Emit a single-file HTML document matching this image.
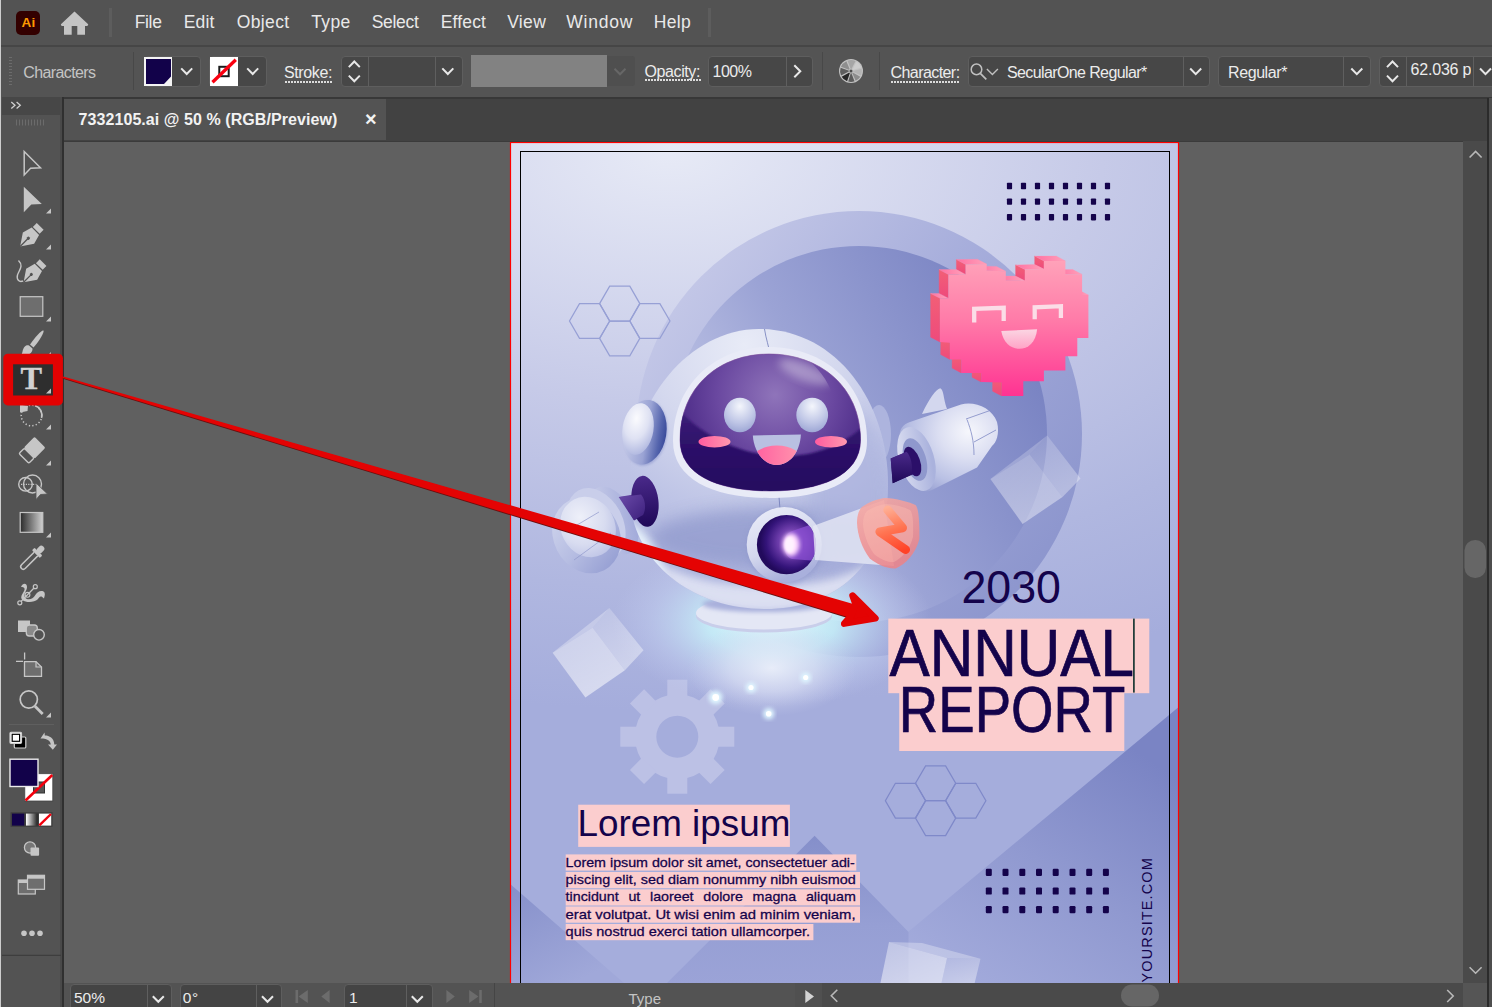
<!DOCTYPE html>
<html>
<head>
<meta charset="utf-8">
<title>7332105.ai @ 50 % (RGB/Preview)</title>
<style>
*{box-sizing:border-box;margin:0;padding:0}
html,body{width:1492px;height:1007px;overflow:hidden;background:#535353;font-family:"Liberation Sans",sans-serif;color:#e4e4e4}
#app{position:absolute;left:0;top:0;width:1492px;height:1007px;overflow:hidden;background:#535353}
.abs{position:absolute}
svg{position:absolute;overflow:visible}
.t{position:absolute;white-space:nowrap;line-height:1}
#menubar{left:0;top:0;width:1492px;height:45px;background:#535353}
#mline{left:0;top:45px;width:1492px;height:2px;background:#464646}
#ctrlbar{left:0;top:47px;width:1492px;height:50.5px;background:#545454}
#cline{left:0;top:97.4px;width:1492px;height:1.7px;background:#383838}
.fld{position:absolute;top:56px;height:31px;background:#474747;border:1px solid #5e5e5e;border-radius:4px}
.fld i{position:absolute;top:0;width:1px;height:29px;background:#5f5f5f}
#tabbar{left:63.9px;top:99px;width:1424px;height:42.7px;background:#424242;border-bottom:1.7px solid #3b3b3b}
#tab{left:63.9px;top:99px;width:322.1px;height:41px;background:#535353}
#canvas{left:63.9px;top:141.7px;width:1399.1px;height:841.3px;background:#606060;overflow:hidden}
#tools{left:1.3px;top:97.4px;width:59.2px;height:910px;background:#535353}
</style>
</head>
<body>
<div id="app">
<div id="menubar" class="abs"></div>
<div id="mline" class="abs"></div>
<div id="ctrlbar" class="abs"></div>
<div id="cline" class="abs"></div>
<div id="tabbar" class="abs"></div>
<div id="tab" class="abs"></div>
<div id="canvas" class="abs">
<svg style="left:-63.9px;top:-141.7px" width="1492" height="1007" viewBox="0 0 1492 1007">
<defs>
<clipPath id="ab"><rect x="511" y="143" width="667.5" height="845"/></clipPath>
<radialGradient id="bg" gradientUnits="userSpaceOnUse" cx="670" cy="150" r="560" gradientTransform="translate(670 150) scale(1.72 1) translate(-670 -150)"><stop offset="0" stop-color="#e7eaf6"/><stop offset="0.45" stop-color="#c6cae8"/><stop offset="0.78" stop-color="#b0b7e0"/><stop offset="1" stop-color="#a5addc"/></radialGradient>
<linearGradient id="ring" gradientUnits="userSpaceOnUse" x1="690" y1="280" x2="1060" y2="560"><stop offset="0" stop-color="#c3c7e7"/><stop offset="0.45" stop-color="#a6addb"/><stop offset="1" stop-color="#8c95cd"/></linearGradient>
<linearGradient id="disc" gradientUnits="userSpaceOnUse" x1="1010" y1="330" x2="660" y2="520"><stop offset="0" stop-color="#7a84c3"/><stop offset="0.5" stop-color="#9ba3d5"/><stop offset="1" stop-color="#cdd1ec"/></linearGradient>
<linearGradient id="dark" gradientUnits="userSpaceOnUse" x1="1120" y1="740" x2="960" y2="980"><stop offset="0" stop-color="#7a84c4"/><stop offset="0.5" stop-color="#9099d0"/><stop offset="1" stop-color="#a2aadb"/></linearGradient>
<linearGradient id="dark3" gradientUnits="userSpaceOnUse" x1="0" y1="836" x2="0" y2="985"><stop offset="0" stop-color="#858fca"/><stop offset="0.6" stop-color="#969fd4"/><stop offset="1" stop-color="#9ba3d7"/></linearGradient>
<linearGradient id="dark2" gradientUnits="userSpaceOnUse" x1="510" y1="890" x2="560" y2="990"><stop offset="0" stop-color="#8791cb"/><stop offset="1" stop-color="#a0a8d9"/></linearGradient>
<radialGradient id="glow" cx="0.5" cy="0.5" r="0.5"><stop offset="0" stop-color="#e2feff" stop-opacity="1"/><stop offset="0.4" stop-color="#c8f2fa" stop-opacity="0.85"/><stop offset="0.75" stop-color="#c4d2f2" stop-opacity="0.4"/><stop offset="1" stop-color="#c0c8ee" stop-opacity="0"/></radialGradient>
<radialGradient id="glow2" cx="0.5" cy="0.5" r="0.5"><stop offset="0" stop-color="#eceffa" stop-opacity="0.9"/><stop offset="0.5" stop-color="#dde1f4" stop-opacity="0.6"/><stop offset="1" stop-color="#c8cdec" stop-opacity="0"/></radialGradient>
<radialGradient id="body" gradientUnits="userSpaceOnUse" cx="745" cy="345" r="275"><stop offset="0" stop-color="#e8ebf7"/><stop offset="0.35" stop-color="#d4d8ee"/><stop offset="0.62" stop-color="#bec4e6"/><stop offset="1" stop-color="#a3abd9"/></radialGradient>
<radialGradient id="face" gradientUnits="userSpaceOnUse" cx="775" cy="395" r="105"><stop offset="0" stop-color="#8f74ba"/><stop offset="0.55" stop-color="#6a48a0"/><stop offset="1" stop-color="#472683"/></radialGradient>
<linearGradient id="faceLow" x1="0" y1="0" x2="0" y2="1"><stop offset="0" stop-color="#43237f"/><stop offset="0.5" stop-color="#2c1068"/><stop offset="1" stop-color="#230a5e"/></linearGradient>
<radialGradient id="eye" cx="0.5" cy="0.25" r="0.8"><stop offset="0" stop-color="#f4f6fc"/><stop offset="0.6" stop-color="#bfc6e6"/><stop offset="1" stop-color="#98a2d2"/></radialGradient>
<linearGradient id="cheek" x1="0" x2="1"><stop offset="0" stop-color="#ff5c9f"/><stop offset="1" stop-color="#ff98ae"/></linearGradient>
<linearGradient id="heart" x1="0" y1="0" x2="0" y2="1"><stop offset="0" stop-color="#ffa2b9"/><stop offset="0.45" stop-color="#ff7aa8"/><stop offset="1" stop-color="#ff3392"/></linearGradient>
<linearGradient id="heartT" x1="0" y1="0" x2="1" y2="0"><stop offset="0" stop-color="#ff70a2"/><stop offset="1" stop-color="#ffa2ba"/></linearGradient>
<linearGradient id="hmouth" x1="0" y1="0" x2="0" y2="1"><stop offset="0" stop-color="#fbd6e3"/><stop offset="1" stop-color="#ffa3c6"/></linearGradient>
<linearGradient id="heartS" x1="0" y1="0" x2="0" y2="1"><stop offset="0" stop-color="#f26076"/><stop offset="1" stop-color="#ee4a7c"/></linearGradient>
<radialGradient id="glove" cx="0.7" cy="0.32" r="0.85"><stop offset="0" stop-color="#f6f7fc"/><stop offset="0.35" stop-color="#dcdff2"/><stop offset="0.7" stop-color="#b9c0e4"/><stop offset="1" stop-color="#8f98cd"/></radialGradient>
<linearGradient id="handB" x1="0" y1="0" x2="1" y2="0.6"><stop offset="0" stop-color="#d2d6ed"/><stop offset="1" stop-color="#a3abda"/></linearGradient>
<linearGradient id="handF" x1="0.2" y1="0" x2="0.6" y2="1"><stop offset="0" stop-color="#d0d5ed"/><stop offset="0.55" stop-color="#b6bde2"/><stop offset="1" stop-color="#98a1d4"/></linearGradient>
<radialGradient id="handI" cx="0.45" cy="0.3" r="0.75"><stop offset="0" stop-color="#eef0f9"/><stop offset="0.6" stop-color="#d8dcf0"/><stop offset="1" stop-color="#bcc2e5"/></radialGradient>
<linearGradient id="earO" x1="0" y1="0" x2="1" y2="0"><stop offset="0" stop-color="#c9ceea"/><stop offset="0.55" stop-color="#9aa3d4"/><stop offset="0.85" stop-color="#5464ad"/><stop offset="1" stop-color="#3a4b9b"/></linearGradient>
<radialGradient id="earI" cx="0.4" cy="0.3" r="0.8"><stop offset="0" stop-color="#fbfbfe"/><stop offset="0.5" stop-color="#dfe2f3"/><stop offset="1" stop-color="#a7afdc"/></radialGradient>
<linearGradient id="armL" x1="0" y1="0" x2="1" y2="1"><stop offset="0" stop-color="#6a4aa8"/><stop offset="1" stop-color="#3c1f7c"/></linearGradient>
<linearGradient id="cuff" x1="0" y1="0" x2="1" y2="0.3"><stop offset="0" stop-color="#dfe2f3"/><stop offset="1" stop-color="#aab2dd"/></linearGradient>
<linearGradient id="shield" x1="0" y1="0" x2="0.3" y2="1"><stop offset="0" stop-color="#f7a9a2"/><stop offset="1" stop-color="#ec8388"/></linearGradient>
<linearGradient id="bolt" gradientUnits="userSpaceOnUse" x1="885" y1="508" x2="900" y2="552"><stop offset="0" stop-color="#ffb096"/><stop offset="0.5" stop-color="#ff7452"/><stop offset="1" stop-color="#ff4228"/></linearGradient>
<linearGradient id="arm" x1="0" y1="0" x2="0" y2="1"><stop offset="0" stop-color="#4a2a8a"/><stop offset="1" stop-color="#1f0858"/></linearGradient>
<radialGradient id="chest" gradientUnits="userSpaceOnUse" cx="792" cy="542" r="32"><stop offset="0" stop-color="#9a62d0"/><stop offset="0.45" stop-color="#6a3aa8"/><stop offset="0.8" stop-color="#34147a"/><stop offset="1" stop-color="#220a5c"/></radialGradient>
<linearGradient id="rim" x1="0" y1="0" x2="0.4" y2="1"><stop offset="0" stop-color="#eceef9"/><stop offset="0.6" stop-color="#d4d8ee"/><stop offset="1" stop-color="#a9b0dc"/></linearGradient>
<linearGradient id="beam" gradientUnits="userSpaceOnUse" x1="800" y1="545" x2="890" y2="535"><stop offset="0" stop-color="#fff" stop-opacity="0.95"/><stop offset="1" stop-color="#eef0fa" stop-opacity="0.55"/></linearGradient>
<linearGradient id="cubeA" x1="0" y1="0" x2="0.6" y2="1"><stop offset="0" stop-color="#fff" stop-opacity="0.38"/><stop offset="1" stop-color="#fff" stop-opacity="0.55"/></linearGradient>
<linearGradient id="cubeB" x1="0" y1="0" x2="0.4" y2="1"><stop offset="0" stop-color="#fff" stop-opacity="0.18"/><stop offset="1" stop-color="#fff" stop-opacity="0.42"/></linearGradient>
<filter id="b2" x="-20%" y="-20%" width="140%" height="140%"><feGaussianBlur stdDeviation="2"/></filter>
<filter id="b4" x="-30%" y="-30%" width="160%" height="160%"><feGaussianBlur stdDeviation="4"/></filter>
<filter id="b8" x="-30%" y="-30%" width="160%" height="160%"><feGaussianBlur stdDeviation="8"/></filter>
<filter id="b1" x="-20%" y="-20%" width="140%" height="140%"><feGaussianBlur stdDeviation="1"/></filter>
</defs>
<g clip-path="url(#ab)">
<rect x="510" y="142" width="670" height="850" fill="url(#bg)"/>
<circle cx="859" cy="434" r="223" fill="url(#ring)"/>
<circle cx="859" cy="434" r="188" fill="url(#disc)"/>
<polygon points="1180,706 908,932 908,990 1180,990" fill="url(#dark)"/>
<polygon points="814.6,835.7 908.5,932 908.5,990 660,990" fill="url(#dark3)"/>
<polygon points="510,884 632,990 510,990" fill="url(#dark2)"/>
<polygon points="639.8,303.6 629.8,321.0 609.7,321.0 599.6,303.6 609.7,286.2 629.8,286.2" fill="none" stroke="#97a0d5" stroke-width="1.25"/><polygon points="609.7,321.0 599.6,338.4 579.5,338.4 569.5,321.0 579.5,303.6 599.6,303.6" fill="none" stroke="#97a0d5" stroke-width="1.25"/><polygon points="670.0,321.0 659.9,338.4 639.8,338.4 629.8,321.0 639.8,303.6 659.9,303.6" fill="none" stroke="#97a0d5" stroke-width="1.25"/><polygon points="639.8,338.4 629.8,355.8 609.7,355.8 599.6,338.4 609.7,321.0 629.8,321.0" fill="none" stroke="#97a0d5" stroke-width="1.25"/>
<polygon points="955.7,783.3 945.6,800.7 925.6,800.7 915.5,783.3 925.6,765.9 945.6,765.9" fill="none" stroke="#7f89c9" stroke-width="1.25"/><polygon points="925.6,800.7 915.5,818.1 895.4,818.1 885.4,800.7 895.4,783.3 915.5,783.3" fill="none" stroke="#7f89c9" stroke-width="1.25"/><polygon points="985.9,800.7 975.8,818.1 955.7,818.1 945.6,800.7 955.7,783.3 975.8,783.3" fill="none" stroke="#7f89c9" stroke-width="1.25"/><polygon points="955.7,818.1 945.6,835.5 925.6,835.5 915.5,818.1 925.6,800.7 945.6,800.7" fill="none" stroke="#7f89c9" stroke-width="1.25"/>
<g fill="#bcc1e5"><path fill-rule="evenodd" d="M677.3 736.7 m-42.5 0 a42.5 42.5 0 1 0 85 0 a42.5 42.5 0 1 0 -85 0 Z M677.3 736.7 m-21 0 a21 21 0 1 1 42 0 a21 21 0 1 1 -42 0 Z"/><rect x="667.3" y="679.7" width="20" height="17.5" transform="rotate(0 677.3 736.7)"/><rect x="667.3" y="679.7" width="20" height="17.5" transform="rotate(45 677.3 736.7)"/><rect x="667.3" y="679.7" width="20" height="17.5" transform="rotate(90 677.3 736.7)"/><rect x="667.3" y="679.7" width="20" height="17.5" transform="rotate(135 677.3 736.7)"/><rect x="667.3" y="679.7" width="20" height="17.5" transform="rotate(180 677.3 736.7)"/><rect x="667.3" y="679.7" width="20" height="17.5" transform="rotate(225 677.3 736.7)"/><rect x="667.3" y="679.7" width="20" height="17.5" transform="rotate(270 677.3 736.7)"/><rect x="667.3" y="679.7" width="20" height="17.5" transform="rotate(315 677.3 736.7)"/></g>
<g fill="#14034b"><rect x="1006.9" y="182.8" width="5.2" height="6.4" rx="0.8"/><rect x="1020.9" y="182.8" width="5.2" height="6.4" rx="0.8"/><rect x="1034.9" y="182.8" width="5.2" height="6.4" rx="0.8"/><rect x="1048.9" y="182.8" width="5.2" height="6.4" rx="0.8"/><rect x="1062.9" y="182.8" width="5.2" height="6.4" rx="0.8"/><rect x="1076.9" y="182.8" width="5.2" height="6.4" rx="0.8"/><rect x="1090.9" y="182.8" width="5.2" height="6.4" rx="0.8"/><rect x="1104.9" y="182.8" width="5.2" height="6.4" rx="0.8"/><rect x="1006.9" y="198.4" width="5.2" height="6.4" rx="0.8"/><rect x="1020.9" y="198.4" width="5.2" height="6.4" rx="0.8"/><rect x="1034.9" y="198.4" width="5.2" height="6.4" rx="0.8"/><rect x="1048.9" y="198.4" width="5.2" height="6.4" rx="0.8"/><rect x="1062.9" y="198.4" width="5.2" height="6.4" rx="0.8"/><rect x="1076.9" y="198.4" width="5.2" height="6.4" rx="0.8"/><rect x="1090.9" y="198.4" width="5.2" height="6.4" rx="0.8"/><rect x="1104.9" y="198.4" width="5.2" height="6.4" rx="0.8"/><rect x="1006.9" y="214.0" width="5.2" height="6.4" rx="0.8"/><rect x="1020.9" y="214.0" width="5.2" height="6.4" rx="0.8"/><rect x="1034.9" y="214.0" width="5.2" height="6.4" rx="0.8"/><rect x="1048.9" y="214.0" width="5.2" height="6.4" rx="0.8"/><rect x="1062.9" y="214.0" width="5.2" height="6.4" rx="0.8"/><rect x="1076.9" y="214.0" width="5.2" height="6.4" rx="0.8"/><rect x="1090.9" y="214.0" width="5.2" height="6.4" rx="0.8"/><rect x="1104.9" y="214.0" width="5.2" height="6.4" rx="0.8"/></g>
<g fill="#14034b"><rect x="985.8" y="868.8" width="6" height="7.2" rx="1.2"/><rect x="1002.5" y="868.8" width="6" height="7.2" rx="1.2"/><rect x="1019.3" y="868.8" width="6" height="7.2" rx="1.2"/><rect x="1036.0" y="868.8" width="6" height="7.2" rx="1.2"/><rect x="1052.7" y="868.8" width="6" height="7.2" rx="1.2"/><rect x="1069.5" y="868.8" width="6" height="7.2" rx="1.2"/><rect x="1086.2" y="868.8" width="6" height="7.2" rx="1.2"/><rect x="1102.9" y="868.8" width="6" height="7.2" rx="1.2"/><rect x="985.8" y="887.4" width="6" height="7.2" rx="1.2"/><rect x="1002.5" y="887.4" width="6" height="7.2" rx="1.2"/><rect x="1019.3" y="887.4" width="6" height="7.2" rx="1.2"/><rect x="1036.0" y="887.4" width="6" height="7.2" rx="1.2"/><rect x="1052.7" y="887.4" width="6" height="7.2" rx="1.2"/><rect x="1069.5" y="887.4" width="6" height="7.2" rx="1.2"/><rect x="1086.2" y="887.4" width="6" height="7.2" rx="1.2"/><rect x="1102.9" y="887.4" width="6" height="7.2" rx="1.2"/><rect x="985.8" y="906.0" width="6" height="7.2" rx="1.2"/><rect x="1002.5" y="906.0" width="6" height="7.2" rx="1.2"/><rect x="1019.3" y="906.0" width="6" height="7.2" rx="1.2"/><rect x="1036.0" y="906.0" width="6" height="7.2" rx="1.2"/><rect x="1052.7" y="906.0" width="6" height="7.2" rx="1.2"/><rect x="1069.5" y="906.0" width="6" height="7.2" rx="1.2"/><rect x="1086.2" y="906.0" width="6" height="7.2" rx="1.2"/><rect x="1102.9" y="906.0" width="6" height="7.2" rx="1.2"/></g>
<ellipse cx="772" cy="622" rx="160" ry="85" fill="url(#glow)"/><ellipse cx="772" cy="668" rx="85" ry="48" fill="url(#glow2)"/>
<polygon points="552.6,652.8 592.6,627.8 624.9,670.3 585.4,697.5" fill="url(#cubeA)"/><polygon points="552.6,652.8 609.4,607.9 592.6,627.8" fill="#fff" fill-opacity="0.3"/><polygon points="592.6,627.8 609.4,607.9 643.5,650.2 624.9,670.3" fill="url(#cubeB)"/>
<polygon points="990.4,479.1 1029.7,454.5 1062.5,497.1 1022.6,523.9" fill="url(#cubeA)" opacity="0.75"/><polygon points="990.4,479.1 1047.2,435.4 1029.7,454.5" fill="#fff" fill-opacity="0.22"/><polygon points="1029.7,454.5 1047.2,435.4 1080.5,478.5 1062.5,497.1" fill="url(#cubeB)" opacity="0.8"/>
<polygon points="889,942 947,958 940,990 879,990" fill="url(#cubeA)"/><polygon points="947,958 980.5,958.7 973,990 940,990" fill="url(#cubeB)"/><polygon points="889,942 922,943 980.5,958.7 947,958" fill="#fff" fill-opacity="0.3"/>
<circle cx="715.7" cy="697.5" r="6.8" fill="#dff6ff" filter="url(#b2)"/><circle cx="715.7" cy="697.5" r="3.4" fill="#fff"/><circle cx="751" cy="687.5" r="5.2" fill="#dff6ff" filter="url(#b2)"/><circle cx="751" cy="687.5" r="2.6" fill="#fff"/><circle cx="805.7" cy="677.5" r="5.2" fill="#dff6ff" filter="url(#b2)"/><circle cx="805.7" cy="677.5" r="2.6" fill="#fff"/><circle cx="768.7" cy="713.7" r="5.6" fill="#dff6ff" filter="url(#b2)"/><circle cx="768.7" cy="713.7" r="2.8" fill="#fff"/>
<ellipse cx="879" cy="434" rx="12" ry="29" fill="#b1b8e0" opacity="0.85"/>
<path d="M922 414 C929 399 936 389 940.3 388.3 C944 390 943 398 947 409 Z" fill="#d3d7ee"/>
<path d="M900 440 C898 430 903 424 910 422 L961 404.5 C975 401 992 408 997 422 C1000 434 996 443 992 446 L977 467.5 L932 490 C925 493 917 491 916 489 Z" fill="url(#glove)"/>
<ellipse cx="916.5" cy="459" rx="17.5" ry="33" transform="rotate(-17 916.5 459)" fill="url(#cuff)"/>
<ellipse cx="915" cy="459.5" rx="11" ry="22" transform="rotate(-17 915 459.5)" fill="#8f98cd"/>
<path d="M890.7 458.4 L907.5 451.4 L915.5 473.3 L892.7 483.2 Z" fill="url(#arm)"/>
<ellipse cx="912.5" cy="461.5" rx="7.5" ry="15.5" transform="rotate(-20 912.5 461.5)" fill="#2b0f69"/>
<path d="M890.7 458.4 L906.5 451.8 C911 456 913 466 911.5 474.5 L892.7 483.2 Z" fill="url(#arm)"/>
<path d="M966 419 L990 410.5 M974 442 L996 430 M967 419.5 C971 430 974 441 974 455" fill="none" stroke="#7f89c4" stroke-width="0.8"/>
<ellipse cx="613.5" cy="520.5" rx="21" ry="36.5" transform="rotate(-27 613.5 520.5)" fill="url(#handB)"/>
<ellipse cx="596" cy="524" rx="27" ry="38" transform="rotate(-27 596 524)" fill="#c9ceea"/>
<ellipse cx="586.5" cy="535.5" rx="33" ry="39" transform="rotate(-27 586.5 535.5)" fill="url(#handF)"/>
<ellipse cx="588" cy="527" rx="27" ry="31" transform="rotate(-27 588 527)" fill="url(#handI)"/>
<path d="M572 528 L599 512 M574 560 L611 533" fill="none" stroke="#8f98cc" stroke-width="0.7"/>
<ellipse cx="764" cy="616" rx="68" ry="16.5" fill="#c9ceea"/>
<ellipse cx="764" cy="613" rx="68" ry="16.5" fill="#e4e7f5"/>
<ellipse cx="764" cy="604" rx="62" ry="8" fill="#a9b0dc" filter="url(#b2)"/>
<clipPath id="bc"><path d="M759 329 C690 329 629 400 629 489 C629 560 690 609 765 609 C840 609 888 560 888 485 C888 400 835 329 759 329 Z"/></clipPath>
<path d="M759 329 C690 329 629 400 629 489 C629 560 690 609 765 609 C840 609 888 560 888 485 C888 400 835 329 759 329 Z" fill="url(#body)"/>
<g clip-path="url(#bc)"><ellipse cx="775" cy="538" rx="125" ry="30" fill="#8d96cb" opacity="0.7" filter="url(#b8)"/><ellipse cx="850" cy="500" rx="40" ry="90" fill="#a9b0dc" opacity="0.6" filter="url(#b8)"/><path d="M640 550 C670 600 720 612 765 612 C810 612 850 598 876 560 C850 578 810 586 765 586 C720 586 675 578 640 550 Z" fill="#dfe2f3" opacity="0.95" filter="url(#b4)"/><ellipse cx="642" cy="560" rx="16" ry="40" transform="rotate(-25 642 560)" fill="#eefaff" opacity="0.9" filter="url(#b4)"/></g>
<path d="M764.5 329 C766 339 769 347 770 354 M779 497 L780 509" stroke="#6f7ab8" stroke-width="0.8" fill="none"/>
<ellipse cx="646" cy="433.5" rx="21" ry="32.5" transform="rotate(9 646 433.5)" fill="#7d88c6" opacity="0.5" filter="url(#b1)"/>
<ellipse cx="644.6" cy="432.2" rx="21.8" ry="32.5" transform="rotate(9 644.6 432.2)" fill="url(#earO)"/>
<ellipse cx="638" cy="429" rx="15.5" ry="26" transform="rotate(9 638 429)" fill="url(#earI)"/>
<path d="M618.7 497 L642.7 493 L646 514 L634 520.5 Z" fill="url(#armL)"/>
<ellipse cx="645" cy="501.3" rx="13.4" ry="25.6" transform="rotate(-7 645 501.3)" fill="url(#arm)"/>
<path d="M620 497 L641 494.5 C646 500 646 510 643 515 L634 520 Z" fill="url(#armL)"/>
<path d="M673 441 C673 384 716 347 769 347 C824 347 867 384 867 441 C867 481 824 498 770 498 C716 498 673 481 673 441 Z" fill="#e9ebf7"/>
<path d="M680 440 C680 386 720 354 769 354 C819 354 860.5 386 860.5 440 C860.5 476 820 491 770 491 C720 491 680 476 680 440 Z" fill="url(#face)" stroke="#7b4b9a" stroke-width="1" stroke-opacity="0.6"/>
<clipPath id="fc"><path d="M680 440 C680 386 720 354 769 354 C819 354 860.5 386 860.5 440 C860.5 476 820 491 770 491 C720 491 680 476 680 440 Z"/></clipPath>
<path clip-path="url(#fc)" d="M670 398 C690 428 735 458 790 456 C828 454 852 438 870 420 L870 500 L670 500 Z" fill="url(#faceLow)" filter="url(#b1)"/>
<ellipse cx="805" cy="372" rx="28" ry="9" transform="rotate(22 805 372)" fill="#fff" opacity="0.35" filter="url(#b4)" clip-path="url(#fc)"/>
<ellipse cx="739.9" cy="415" rx="15.9" ry="17.3" fill="url(#eye)"/><ellipse cx="812.2" cy="415" rx="15.9" ry="17.3" fill="url(#eye)"/>
<ellipse cx="714.5" cy="441.7" rx="16" ry="5.8" fill="url(#cheek)"/><ellipse cx="831" cy="441.7" rx="16" ry="5.8" fill="url(#cheek)"/>
<clipPath id="mc"><path d="M752.8 435.4 L800.9 434.6 C800 452 790 465 777 465 C764 465 754 452 752.8 435.4 Z"/></clipPath>
<g clip-path="url(#mc)"><rect x="750" y="432" width="54" height="36" fill="#b9c0e2"/><ellipse cx="777" cy="462" rx="26" ry="16.5" fill="url(#cheek)"/></g>
<circle cx="784.6" cy="546" r="39" fill="#8f98cc" opacity="0.5" filter="url(#b2)"/>
<circle cx="784.3" cy="544.7" r="37.6" fill="url(#rim)"/>
<circle cx="786.5" cy="544.7" r="29.6" fill="url(#chest)"/>
<clipPath id="cc"><circle cx="786.5" cy="544.7" r="29.6"/></clipPath>
<path clip-path="url(#cc)" d="M792 531 L830 518 L830 562 L792 559 C782 556 780 535 792 531 Z" fill="#8d52d6" opacity="0.75"/>
<path d="M813 526 L884 500 L894 566 L815 560 Z" fill="#e6e8f5" opacity="0.8"/>
<ellipse cx="791" cy="544.7" rx="8.5" ry="11.5" fill="#ffdcff" filter="url(#b2)"/>
<ellipse cx="789.5" cy="544.7" rx="5" ry="8" fill="#fff2ff" filter="url(#b1)"/>
<path d="M861.9 507 C869 502 878 498.5 885.7 498 C896 498.5 908 501.5 915.5 505 C918.5 508 919.5 520 919.4 538.7 C916 553 906 564 895.6 568.5 C886 569 877 564 869.8 558.6 C862 548 857.5 535 857 522.9 C857 515 859 510 861.9 507 Z" fill="url(#shield)" fill-opacity="0.86"/>
<path d="M867 511 C873 507 880 504.5 886 504 C895 504.5 904 507 910 510 C913 513 913.5 523 913 537 C910 549 902 558 894 562 C887 562.5 880 559 874 554 C868 546 863.5 534 863 524 C863 518 864.5 513.5 867 511 Z" fill="#ffc2b4" fill-opacity="0.35"/>
<path d="M887.7 510 L902.6 527.8 L879.8 531.8 L905.6 549.6" fill="none" stroke="url(#bolt)" stroke-width="8.8" stroke-linecap="round" stroke-linejoin="round"/>
<g fill="url(#heartS)" stroke="url(#heartS)" stroke-width="0.4"><polygon points="1024.9,280.7 1024.9,269.6 1015.6,264.9 1015.6,276.0"/><polygon points="1043.9,269.1 1043.9,260.9 1034.7,256.1 1034.7,264.4"/><polygon points="1001.8,395.9 1001.8,382.4 992.6,377.7 992.6,391.2"/><polygon points="981.2,382.0 981.2,372.9 972.0,368.1 972.0,377.2"/><polygon points="961.3,372.9 961.3,359.4 952.1,354.6 952.1,368.1"/><polygon points="949.9,359.4 949.9,342.7 940.7,337.9 940.7,354.6"/><polygon points="939.9,341.9 939.9,298.2 930.6,293.5 930.6,337.2"/><polygon points="948.3,298.2 948.3,274.4 939.1,269.6 939.1,293.5"/><polygon points="965.6,274.4 965.6,264.4 956.4,259.6 956.4,269.6"/></g>
<g fill="url(#heartT)" stroke="#ff8fb0" stroke-width="0.3"><polygon points="965.6,264.4 986.7,264.1 977.5,259.3 956.4,259.6"/><polygon points="986.7,270.7 1005.8,271.2 996.6,266.4 977.5,266.0"/><polygon points="1005.8,280.7 1024.9,280.7 1015.6,276.0 996.6,276.0"/><polygon points="1024.9,269.6 1043.9,269.1 1034.7,264.4 1015.6,264.9"/><polygon points="1043.9,260.9 1065.4,260.9 1056.2,256.1 1034.7,256.1"/><polygon points="1065.4,274.4 1082.1,274.4 1072.8,269.6 1056.2,269.6"/><polygon points="1082.1,295.0 1088.4,295.0 1079.2,290.3 1072.8,290.3"/><polygon points="939.9,298.2 948.3,298.2 939.1,293.5 930.6,293.5"/><polygon points="948.3,274.4 965.6,274.4 956.4,269.6 939.1,269.6"/></g>
<polygon points="965.6,264.4 986.7,264.1 986.7,270.7 1005.8,271.2 1005.8,280.7 1024.9,280.7 1024.9,269.6 1043.9,269.1 1043.9,260.9 1065.4,260.9 1065.4,274.4 1082.1,274.4 1082.1,295.0 1088.4,295.0 1088.4,337.9 1077.3,337.9 1077.3,356.2 1065.4,356.2 1065.4,370.5 1043.9,370.5 1043.9,381.3 1023.3,381.3 1023.3,395.9 1001.8,395.9 1001.8,382.4 981.2,382.0 981.2,372.9 961.3,372.9 961.3,359.4 949.9,359.4 949.9,342.7 939.9,341.9 939.9,298.2 948.3,298.2 948.3,274.4 965.6,274.4" fill="url(#heart)"/>
<polyline points="974.2,322.4 974.2,308.9 1003.7,307.8 1003.7,320.9" fill="none" stroke="#fbdde7" stroke-width="4.3"/><polyline points="1034.7,319.2 1034.7,307.3 1060.9,306.2 1060.9,318.1" fill="none" stroke="#fbdde7" stroke-width="4.3"/>
<path d="M1001.3 331.0 L1037.1 329.2 C1035.1 354.7 1005.3 355.5 1001.3 331.0 Z" fill="url(#hmouth)"/>
<g fill="#fbcdce"><rect x="888.3" y="618.6" width="261" height="74.6"/><rect x="899.2" y="692.6" width="225.1" height="58.4"/><rect x="578.2" y="804.7" width="211.7" height="42.2"/><rect x="565.7" y="854.4" width="290.6" height="16.2"/><rect x="565.7" y="872" width="294.3" height="16.2"/><rect x="565.7" y="889.3" width="294.3" height="16.2"/><rect x="565.7" y="906.5" width="294.3" height="16.2"/><rect x="565.7" y="924" width="247.7" height="16.2"/></g>
<g fill="#14034b" font-family="Liberation Sans, sans-serif">
<text x="961.5" y="602.5" font-size="46" textLength="99.5" lengthAdjust="spacingAndGlyphs" >2030</text>
<text x="889.6" y="675.9" font-size="66.5" textLength="244.5" lengthAdjust="spacingAndGlyphs" stroke="#14034b" stroke-width="0.7">ANNUAL</text>
<text x="898.8" y="732.4" font-size="65.5" textLength="226.5" lengthAdjust="spacingAndGlyphs" stroke="#14034b" stroke-width="0.7">REPORT</text>
<text x="577.4" y="836.2" font-size="37.5" textLength="213" lengthAdjust="spacingAndGlyphs" >Lorem ipsum</text>
<text x="565.6" y="866.9" font-size="13.6" textLength="289.2" lengthAdjust="spacingAndGlyphs" stroke="#14034b" stroke-width="0.28">Lorem ipsum dolor sit amet, consectetuer adi-</text>
<text x="565.6" y="884.1" font-size="13.6" textLength="290.2" lengthAdjust="spacingAndGlyphs" stroke="#14034b" stroke-width="0.28">piscing elit, sed diam nonummy nibh euismod</text>
<text x="565.6" y="901.4" font-size="13.6" textLength="290.2" lengthAdjust="spacingAndGlyphs" stroke="#14034b" stroke-width="0.28" word-spacing="5.5">tincidunt ut laoreet dolore magna aliquam</text>
<text x="565.6" y="918.6" font-size="13.6" textLength="290" lengthAdjust="spacingAndGlyphs" stroke="#14034b" stroke-width="0.28">erat volutpat. Ut wisi enim ad minim veniam,</text>
<text x="565.6" y="935.7" font-size="13.6" textLength="244.5" lengthAdjust="spacingAndGlyphs" stroke="#14034b" stroke-width="0.28">quis nostrud exerci tation ullamcorper.</text>
<text transform="translate(1152.3,1031.2) rotate(-90)" x="0" y="0" font-size="14.5" textLength="173" lengthAdjust="spacing">WWW.YOURSITE.COM</text>
</g>
<rect x="1133.1" y="618.6" width="1.6" height="74" fill="#0c2f2c"/>
</g>
<rect x="520.5" y="151.5" width="649" height="860" fill="none" stroke="#000" stroke-width="1"/>
<rect x="510.5" y="142.5" width="668" height="860" fill="none" stroke="#ff0000" stroke-width="1.2"/>
</svg>
</div>
<div id="tools" class="abs"></div>
<div class="abs" style="left:63.9px;top:983px;width:1399.6px;height:24px;background:#535353;"></div>
<div class="abs" style="left:822px;top:983px;width:641px;height:24px;background:#4a4a4a;"></div>
<div class="abs" style="left:1463px;top:983px;width:24px;height:24px;background:#555555;"></div>
<div class="abs" style="left:1463px;top:141px;width:24px;height:842px;background:#4a4a4a;"></div>
<div class="fld" style="left:70px;top:984px;height:28px;width:102px;background:#444"><i style="left:75.5px"></i></div>
<div class="fld" style="left:179.5px;top:984px;height:28px;width:102.5px;background:#444"><i style="left:75.5px"></i></div>
<div class="fld" style="left:344px;top:984px;height:28px;width:88.5px;background:#444"><i style="left:60.5px"></i></div>
<span class="t" style="left:74.00px;top:948px;font-size:15.5px;line-height:100px;letter-spacing:-0.007px;color:#ececec;">50%</span>
<span class="t" style="left:182.80px;top:948px;font-size:15.5px;line-height:100px;letter-spacing:0.591px;color:#ececec;">0°</span>
<span class="t" style="left:349.00px;top:948px;font-size:15.5px;line-height:100px;color:#ececec;">1</span>
<span class="t" style="left:628.50px;top:949px;font-size:15px;line-height:100px;letter-spacing:-0.004px;color:#c4c4c4;">Type</span>
<div class="abs" style="left:494px;top:983px;width:1.2px;height:24px;background:#454545;"></div>
<div class="abs" style="left:795px;top:983px;width:27px;height:24px;background:#505050;"></div>
<svg class="abs" style="left:64px;top:141px" width="1424" height="866" viewBox="64 141 1424 866">
<polyline points="152.8,996.2 158.3,1001.8 163.8,996.2" fill="none" stroke="#e8e8e8" stroke-width="2"/>
<polyline points="262,996.2 267.5,1001.8 273,996.2" fill="none" stroke="#e8e8e8" stroke-width="2"/>
<polyline points="411.8,996.2 417.3,1001.8 422.8,996.2" fill="none" stroke="#e8e8e8" stroke-width="2"/>
<rect x="295.5" y="990" width="2.6" height="13" fill="#6c6c6c"/><polygon points="307.8,990 307.8,1003 298.6,996.5" fill="#6c6c6c"/><polygon points="329.6,990 329.6,1003 321.3,996.5" fill="#6c6c6c"/><polygon points="446.4,990 446.4,1003 454.8,996.5" fill="#6c6c6c"/><polygon points="469.2,990 469.2,1003 478.4,996.5" fill="#6c6c6c"/><rect x="479.2" y="990" width="2.6" height="13" fill="#6c6c6c"/><polygon points="805.3,990 805.3,1003 814,996.5" fill="#d4d4d4"/><polyline points="837.3,989.8 831.3,995.8 837.3,1001.8" fill="none" stroke="#b8b8b8" stroke-width="1.6"/>
<polyline points="1447.2,990 1453.2,996 1447.2,1002" fill="none" stroke="#b8b8b8" stroke-width="1.6"/>
<rect x="1121" y="984.5" width="38" height="22" rx="11" fill="#666"/><polyline points="1469.6,157.5 1475.6,151.5 1481.6,157.5" fill="none" stroke="#b8b8b8" stroke-width="1.6"/>
<polyline points="1469.6,967.2 1475.6,973.2 1481.6,967.2" fill="none" stroke="#b8b8b8" stroke-width="1.6"/>
<rect x="1464.5" y="540" width="21.5" height="38" rx="10.5" fill="#666"/></svg>
<div class="abs" style="left:0px;top:0px;width:1.3px;height:1007px;background:#cdcdcd;"></div>
<div class="abs" style="left:1487px;top:98px;width:2px;height:909px;background:#2b2b2b;"></div>
<div class="abs" style="left:1489px;top:98px;width:3px;height:909px;background:#4e4e4e;"></div>
<div class="abs" style="left:16px;top:11px;width:24px;height:23.5px;background:#330000;border-radius:5px;"></div>
<span class="t" style="left:21.40px;top:-27px;font-size:13.5px;line-height:100px;letter-spacing:0.350px;color:#ff9a00;font-weight:bold;">Ai</span>
<svg class="abs" style="left:60px;top:10px" width="30" height="26" viewBox="60 10 30 26"><path d="M74.5 11.6 L88.2 24.2 Q88.4 26 86.8 26 L85 26 L85 34.8 L77.3 34.8 L77.3 26 L71.7 26 L71.7 34.8 L64 34.8 L64 26 L62.2 26 Q60.6 26 60.9 24.2 Z" fill="#c4c4c4"/></svg>
<div class="abs" style="left:109.3px;top:8px;width:2.4px;height:29px;background:#5d5d5d;"></div>
<div class="abs" style="left:708.3px;top:8px;width:2.4px;height:29px;background:#5d5d5d;"></div>
<span class="t" style="left:134.70px;top:-28px;font-size:17.5px;line-height:100px;letter-spacing:-0.324px;color:#e9e9e9;">File</span>
<span class="t" style="left:183.70px;top:-28px;font-size:17.5px;line-height:100px;letter-spacing:0.186px;color:#e9e9e9;">Edit</span>
<span class="t" style="left:236.70px;top:-28px;font-size:17.5px;line-height:100px;letter-spacing:0.387px;color:#e9e9e9;">Object</span>
<span class="t" style="left:311.20px;top:-28px;font-size:17.5px;line-height:100px;letter-spacing:0.366px;color:#e9e9e9;">Type</span>
<span class="t" style="left:371.70px;top:-28px;font-size:17.5px;line-height:100px;letter-spacing:-0.289px;color:#e9e9e9;">Select</span>
<span class="t" style="left:440.70px;top:-28px;font-size:17.5px;line-height:100px;letter-spacing:0.163px;color:#e9e9e9;">Effect</span>
<span class="t" style="left:507.20px;top:-28px;font-size:17.5px;line-height:100px;letter-spacing:0.321px;color:#e9e9e9;">View</span>
<span class="t" style="left:566.20px;top:-28px;font-size:17.5px;line-height:100px;letter-spacing:0.777px;color:#e9e9e9;">Window</span>
<span class="t" style="left:653.70px;top:-28px;font-size:17.5px;line-height:100px;letter-spacing:0.353px;color:#e9e9e9;">Help</span>
<svg class="abs" style="left:0;top:46px" width="1492" height="52" viewBox="0 46 1492 52">
<line x1="10.5" y1="57" x2="10.5" y2="85" stroke="#6c6c6c" stroke-width="3" stroke-dasharray="1 2"/>
</svg>
<span class="t" style="left:23.20px;top:23px;font-size:16px;line-height:100px;letter-spacing:-0.605px;color:#c4c4c4;">Characters</span>
<div class="abs" style="left:132.5px;top:52px;width:1.2px;height:38px;background:#484848;"></div>
<div class="fld" style="left:143.5px;width:57px"></div>
<div class="abs" style="left:143.8px;top:57px;width:28.4px;height:29px;background:#f4f4f4;"></div>
<div class="abs" style="left:146px;top:59px;width:24.6px;height:25px;background:#12024a;"></div>
<svg class="abs" style="left:144px;top:56px" width="124" height="32" viewBox="144 56 124 32"><polygon points="171,76.5 171,84.5 163.5,84.5" fill="#f4f4f4"/><polyline points="181.2,68.4 186.7,74 192.2,68.4" fill="none" stroke="#e8e8e8" stroke-width="2"/>
</svg>
<div class="fld" style="left:209px;width:58px"></div>
<div class="abs" style="left:210px;top:57px;width:28px;height:29px;background:#ffffff;"></div>
<svg class="abs" style="left:209px;top:56px" width="60" height="32" viewBox="209 56 60 32"><rect x="219.3" y="66.8" width="9.4" height="9.4" fill="none" stroke="#1c1c1c" stroke-width="2"/><line x1="212.5" y1="82.3" x2="235.8" y2="59.8" stroke="#fa0010" stroke-width="3.3"/><polyline points="247.2,68.4 252.7,74 258.2,68.4" fill="none" stroke="#e8e8e8" stroke-width="2"/>
</svg>
<span class="t" style="left:284.00px;top:23px;font-size:16px;line-height:100px;letter-spacing:-0.384px;color:#ececec;">Stroke:</span>
<div class="abs" style="left:285px;top:81px;width:47px;height:2px;background:repeating-linear-gradient(90deg,#dcdcdc 0 2px,transparent 2px 3px);"></div>
<div class="fld" style="left:340.5px;width:122.5px"><i style="left:26.5px"></i><i style="left:93.5px"></i></div>
<svg class="abs" style="left:340px;top:56px" width="124" height="32" viewBox="340 56 124 32"><polyline points="348.8,67.1 354.3,61.5 359.8,67.1" fill="none" stroke="#e8e8e8" stroke-width="2"/>
<polyline points="348.8,75.6 354.3,81.2 359.8,75.6" fill="none" stroke="#e8e8e8" stroke-width="2"/>
<polyline points="442.3,68.4 447.8,74 453.3,68.4" fill="none" stroke="#e8e8e8" stroke-width="2"/>
</svg>
<div class="abs" style="left:471px;top:55px;width:135.5px;height:32px;background:#828282;"></div>
<div class="abs" style="left:606.5px;top:56px;width:28px;height:30px;background:#4f4f4f;border-radius:0 3px 3px 0;"></div>
<svg class="abs" style="left:606px;top:56px" width="30" height="32" viewBox="606 56 30 32"><polyline points="614.5,68.7 620,74.3 625.5,68.7" fill="none" stroke="#676767" stroke-width="2"/>
</svg>
<span class="t" style="left:644.50px;top:22px;font-size:16px;line-height:100px;letter-spacing:-0.398px;color:#ececec;">Opacity:</span>
<div class="abs" style="left:645px;top:79px;width:56px;height:2px;background:repeating-linear-gradient(90deg,#dcdcdc 0 2px,transparent 2px 3px);"></div>
<div class="fld" style="left:708px;width:105px"><i style="left:76.5px"></i></div>
<span class="t" style="left:712.50px;top:22px;font-size:16px;line-height:100px;letter-spacing:-0.480px;color:#ececec;">100%</span>
<svg class="abs" style="left:780px;top:56px" width="40" height="32" viewBox="780 56 40 32"><polyline points="794.3,65.3 800.3,71.3 794.3,77.3" fill="none" stroke="#e8e8e8" stroke-width="2"/>
</svg>
<div class="abs" style="left:821.7px;top:52px;width:1.2px;height:38px;background:#484848;"></div>
<div class="abs" style="left:878.8px;top:52px;width:1.2px;height:38px;background:#484848;"></div>
<svg class="abs" style="left:835.9px;top:55.8px" width="30" height="30" viewBox="-15 -15 30 30"><circle r="12" fill="#c2c2c2"/><path d="M0.06 -1.20 L-3.51 -10.32 A10.9 10.9 0 0 1 4.57 -9.89 Z" fill="#a6a6a6"/><path d="M0.94 -0.75 L5.65 -9.32 A10.9 10.9 0 0 1 10.35 -3.40 Z" fill="#cdcdcd"/><path d="M1.19 0.14 L10.67 -2.23 A10.9 10.9 0 0 1 9.89 4.57 Z" fill="#b4b4b4"/><path d="M0.80 0.89 L9.32 5.65 A10.9 10.9 0 0 1 4.64 9.86 Z" fill="#8c8c8c"/><path d="M0.04 1.20 L3.51 10.32 A10.9 10.9 0 0 1 -2.78 10.54 Z" fill="#5c5c5c"/><path d="M-0.77 0.92 L-3.94 10.16 A10.9 10.9 0 0 1 -9.32 5.65 Z" fill="#272727"/><path d="M-1.20 0.08 L-9.89 4.57 A10.9 10.9 0 0 1 -10.43 -3.15 Z" fill="#5e5e5e"/><path d="M-0.86 -0.83 L-10.02 -4.29 A10.9 10.9 0 0 1 -4.64 -9.86 Z" fill="#8e8e8e"/><circle r="2.3" fill="#c2c2c2"/><circle r="1.5" fill="#4c4c4c"/></svg>
<span class="t" style="left:890.50px;top:23px;font-size:16px;line-height:100px;letter-spacing:-0.569px;color:#ececec;">Character:</span>
<div class="abs" style="left:891px;top:81px;width:68px;height:2px;background:repeating-linear-gradient(90deg,#dcdcdc 0 2px,transparent 2px 3px);"></div>
<div class="fld" style="left:968px;width:242px"><i style="left:213.5px"></i></div>
<svg class="abs" style="left:968px;top:56px" width="244" height="32" viewBox="968 56 244 32"><circle cx="976.5" cy="69.4" r="5.3" fill="none" stroke="#c0c0c0" stroke-width="1.5"/><line x1="980.3" y1="73.3" x2="986.3" y2="79.3" stroke="#c0c0c0" stroke-width="1.7"/><polyline points="986.9,69.1 992.4,74.5 997.9,69.1" fill="none" stroke="#c0c0c0" stroke-width="1.4"/>
<polyline points="1190.2,68.5 1195.7,74.1 1201.2,68.5" fill="none" stroke="#e8e8e8" stroke-width="2"/>
</svg>
<span class="t" style="left:1007.00px;top:23px;font-size:16px;line-height:100px;letter-spacing:-0.615px;color:#ececec;">SecularOne Regular*</span>
<div class="fld" style="left:1218px;width:153px"><i style="left:124px"></i></div>
<span class="t" style="left:1228.00px;top:23px;font-size:16px;line-height:100px;letter-spacing:-0.407px;color:#ececec;">Regular*</span>
<div class="fld" style="left:1379px;width:120px;border-radius:4px 0 0 4px"><i style="left:25.8px"></i><i style="left:93px"></i></div>
<svg class="abs" style="left:1340px;top:56px" width="152" height="32" viewBox="1340 56 152 32"><polyline points="1351.3,68.5 1356.8,74.1 1362.3,68.5" fill="none" stroke="#e8e8e8" stroke-width="2"/>
<polyline points="1387,67.1 1392.5,61.5 1398,67.1" fill="none" stroke="#e8e8e8" stroke-width="2"/>
<polyline points="1387,75.6 1392.5,81.2 1398,75.6" fill="none" stroke="#e8e8e8" stroke-width="2"/>
<polyline points="1480,68.5 1485.5,74.1 1491,68.5" fill="none" stroke="#e8e8e8" stroke-width="2"/>
</svg>
<div class="abs" style="left:1406.5px;top:57px;width:64.5px;height:29px;overflow:hidden"><span class="t" style="left:4.00px;top:-37px;font-size:16px;line-height:100px;letter-spacing:-0.191px;color:#ececec;">62.036 pt</span>
</div>
<span class="t" style="left:78.60px;top:70px;font-size:16px;line-height:100px;letter-spacing:0.067px;color:#f2f2f2;font-weight:bold;">7332105.ai @ 50 % (RGB/Preview)</span>
<span class="t" style="left:364.9px;top:69px;font-size:20px;line-height:100px;color:#f2f2f2;font-weight:bold">×</span>
<div class="abs" style="left:2px;top:97.4px;width:59px;height:17.2px;background:#474747;"></div>
<div class="abs" style="left:60.4px;top:97.4px;width:1.7px;height:910px;background:#494949;"></div>
<div class="abs" style="left:62px;top:97.4px;width:1.9px;height:910px;background:#303030;"></div>
<svg class="abs" style="left:0;top:98px" width="64" height="909" viewBox="0 98 64 909">
<path d="M11.3 102 L15 105.3 L11.3 108.6 M16.6 102 L20.3 105.3 L16.6 108.6" fill="none" stroke="#d0d0d0" stroke-width="1.3"/>
<line x1="16" y1="122.6" x2="44.5" y2="122.6" stroke="#6b6b6b" stroke-width="6" stroke-dasharray="1 2"/>
<path d="M24.2 151.5 L24.2 175 L30.6 168.3 L40.5 167.8 Z" fill="none" stroke="#c6c6c6" stroke-width="1.5" stroke-linejoin="miter"/>
<path d="M23.8 186.8 L23.8 212.3 L31.3 204.4 L41.8 204 Z" fill="#c6c6c6"/>
<polygon points="51,213.5 51,208.5 46,213.5" fill="#c6c6c6"/><g transform="translate(30,236.6) rotate(45) scale(0.93)"><path d="M-5.2 -15.5 h10.4 v6 h-10.4z M-5.6 -8.2 h11.2 l3 10.5 l-8.6 12.7 l-8.6 -12.7z" fill="#c6c6c6"/><path d="M0 15 L0 3" stroke="#535353" stroke-width="1.4"/><circle cx="0" cy="2.5" r="1.7" fill="#535353"/></g>
<polygon points="51,249.5 51,244.5 46,249.5" fill="#c6c6c6"/><g transform="translate(33,272.8) rotate(45) scale(0.95)"><path d="M-5 -15 h10 v5.6 h-10z M-5.4 -8 h10.8 l2.8 10 l-8.2 12 l-8.2 -12z" fill="#c6c6c6"/><path d="M0 14 L0 3" stroke="#535353" stroke-width="1.3"/><circle cx="0" cy="2.5" r="1.6" fill="#535353"/></g>
<path d="M18.5 260.5 C24 266 19 270 17.5 275 C16.3 279.5 19 282.5 23 281" fill="none" stroke="#c6c6c6" stroke-width="1.4"/>
<rect x="20.2" y="296.7" width="22.6" height="19.6" fill="#6e6e6e" stroke="#c6c6c6" stroke-width="1.2"/>
<polygon points="51,321.5 51,316.5 46,321.5" fill="#c6c6c6"/><path d="M43.5 330.5 C44.5 332 40 340 33.5 347.5 L30 344.5 C35 337 42 329.5 43.5 330.5 Z" fill="#c6c6c6"/>
<path d="M29 345.5 L32.5 348.5 C33 353 28 356 20 356.5 C23 354 22 350.5 24 347.5 C25.5 345.3 27.5 345 29 345.5Z" fill="#c6c6c6"/>
<polygon points="51,357 51,352 46,357" fill="#c6c6c6"/><circle cx="31.5" cy="415.5" r="10.3" fill="none" stroke="#c6c6c6" stroke-width="1.5" stroke-dasharray="1.3 2.2"/>
<path d="M35 405.6 A10.3 10.3 0 0 1 41.6 418" fill="none" stroke="#c6c6c6" stroke-width="1.6"/>
<polygon points="20,404.5 28,406 27.5,411 20,412.5" fill="#c6c6c6"/>
<polygon points="51,429.5 51,424.5 46,429.5" fill="#c6c6c6"/><g transform="translate(32,450.3) rotate(-45) scale(0.94)"><rect x="-4" y="-8.2" width="16" height="16.4" rx="1.5" fill="#c6c6c6"/><rect x="-12.2" y="-7.4" width="8" height="14.8" rx="1.5" fill="none" stroke="#c6c6c6" stroke-width="1.5"/></g>
<polygon points="51,465.5 51,460.5 46,465.5" fill="#c6c6c6"/><circle cx="25.5" cy="484.3" r="6.8" fill="none" stroke="#c6c6c6" stroke-width="1.4"/><circle cx="32.5" cy="484" r="9" fill="none" stroke="#c6c6c6" stroke-width="1.4"/>
<line x1="21" y1="484.3" x2="36" y2="484.3" stroke="#c6c6c6" stroke-width="1.3" stroke-dasharray="1.2 1.2"/>
<path d="M36 483 L36 499.5 L40.5 494.5 L47.5 494 Z" fill="#c6c6c6" stroke="#535353" stroke-width="0.8"/>
<defs><linearGradient id="tg" x1="0" x2="1" y1="0" y2="0"><stop offset="0" stop-color="#2a2a2a"/><stop offset="1" stop-color="#d0d0d0"/></linearGradient></defs>
<rect x="20.2" y="512.5" width="22.6" height="19.8" fill="url(#tg)" stroke="#c6c6c6" stroke-width="1.2"/>
<polygon points="51,537.5 51,532.5 46,537.5" fill="#c6c6c6"/><g transform="translate(31,559) rotate(45)"><rect x="-3" y="-17.5" width="6" height="8" rx="2.8" fill="#c6c6c6"/><rect x="-5.5" y="-10.5" width="11" height="3.6" rx="1" fill="#c6c6c6"/><path d="M-2.6 -7 L-2.6 10.5 Q-2.6 13.5 0 13.5 Q2.6 13.5 2.6 10.5 L2.6 -7" fill="none" stroke="#c6c6c6" stroke-width="1.5"/></g>
<path d="M21 587 C23 582 27.5 583.5 27 587.5 C26.5 591.5 23 594 25 597.5 C28 601 33 599 35 595.5 C37 591.5 42 589.5 44.5 592.5 C45.5 595 44 597.5 44 598.5 C40.5 594.5 39.5 597 37.5 599.5 C34.5 602.5 26 603 22.5 600 C18.5 596.5 25.5 591.5 24.5 588.5 C24 587 22.5 587 21 587Z" fill="#c6c6c6"/>
<line x1="20" y1="602.5" x2="35" y2="587" stroke="#c6c6c6" stroke-width="1.2"/><circle cx="19.8" cy="602.8" r="2" fill="#535353" stroke="#c6c6c6" stroke-width="1.2"/><circle cx="35.3" cy="586.7" r="2" fill="#535353" stroke="#c6c6c6" stroke-width="1.2"/><circle cx="27.5" cy="594.8" r="2.4" fill="none" stroke="#c6c6c6" stroke-width="1.1"/>
<rect x="18" y="620.5" width="12" height="11.5" fill="#c6c6c6"/>
<rect x="26.3" y="625" width="11" height="11" rx="3" fill="#8a8a8a" stroke="#c6c6c6" stroke-width="1.3"/>
<circle cx="39" cy="634.8" r="5.3" fill="#535353" stroke="#c6c6c6" stroke-width="1.4"/>
<path d="M24.6 652.5 L24.6 659.5 M16 661.3 L23 661.3" stroke="#c6c6c6" stroke-width="1.3"/>
<path d="M24.5 661.6 L36 661.6 L41.5 667 L41.5 676.3 L24.5 676.3 Z" fill="#6e6e6e" stroke="#c6c6c6" stroke-width="1.3"/><path d="M36 661.6 L36 667 L41.5 667" fill="none" stroke="#c6c6c6" stroke-width="1.2"/>
<circle cx="28.8" cy="699.5" r="8.6" fill="none" stroke="#c6c6c6" stroke-width="1.7"/><line x1="35" y1="706.2" x2="42.7" y2="714" stroke="#c6c6c6" stroke-width="2.8"/>
<polygon points="51,717.5 51,712.5 46,717.5" fill="#c6c6c6"/><line x1="9" y1="724.5" x2="54" y2="724.5" stroke="#5f5f5f" stroke-width="1"/>
<rect x="14.3" y="737" width="11.5" height="11" rx="1" fill="#000" stroke="#cfcfcf" stroke-width="1.2"/><rect x="10" y="732.3" width="11.5" height="11" rx="1" fill="#fff" stroke="#cfcfcf" stroke-width="1.2"/><rect x="12.2" y="734.3" width="7.4" height="7" fill="#fff" stroke="#000" stroke-width="1.2"/>
<path d="M44.5 732.5 L40.5 738.5 L43.3 738.5 C46 739 50.5 740 50.8 744.5 L48 744.5 L52.8 749.8 L57 744.5 L54.3 744.5 C54 738 49 735.5 44.8 735.6 Z" fill="#c6c6c6"/>
<rect x="24.8" y="773.7" width="28" height="27.3" fill="#fff" stroke="#444" stroke-width="0.8"/><rect x="33.5" y="782" width="11" height="11" fill="#555" stroke="#333" stroke-width="1"/>
<line x1="25.5" y1="800.5" x2="52.3" y2="775" stroke="#f2000d" stroke-width="2.6"/>
<rect x="10" y="759.2" width="28" height="27.3" fill="#12024a" stroke="#ececec" stroke-width="1.4"/>
<rect x="10.6" y="812.3" width="42" height="14.5" fill="#3e3e3e"/>
<defs><linearGradient id="tg2" x1="0" x2="1"><stop offset="0" stop-color="#fff"/><stop offset="1" stop-color="#222"/></linearGradient></defs>
<rect x="12" y="813.6" width="12.2" height="12" fill="#12024a"/><rect x="26" y="813.6" width="11.5" height="12" fill="url(#tg2)"/><rect x="39" y="813.6" width="12.2" height="12" fill="#fff"/><line x1="39.3" y1="825.3" x2="51" y2="814" stroke="#f2000d" stroke-width="2.4"/>
<circle cx="30" cy="847.5" r="5.6" fill="#777" stroke="#c6c6c6" stroke-width="1.3"/><rect x="30.5" y="847.6" width="8.6" height="8.2" rx="1" fill="#c6c6c6"/>
<rect x="18.3" y="880" width="17" height="14" fill="#6e6e6e" stroke="#c6c6c6" stroke-width="1.2"/><rect x="18.3" y="880" width="17" height="3" fill="#c6c6c6"/>
<rect x="27.5" y="875.3" width="17" height="14" fill="#6e6e6e" stroke="#c6c6c6" stroke-width="1.2"/><rect x="27.5" y="875.3" width="17" height="3.4" fill="#c6c6c6"/>
<circle cx="24" cy="933.3" r="2.8" fill="#c6c6c6"/><circle cx="32" cy="933.3" r="2.8" fill="#c6c6c6"/><circle cx="40" cy="933.3" r="2.8" fill="#c6c6c6"/>
<line x1="2" y1="955.3" x2="61" y2="955.3" stroke="#3a3a3a" stroke-width="1"/>
<rect x="3.3" y="353.8" width="59.6" height="51.6" rx="4.5" fill="#e30202"/>
<rect x="13.1" y="364.3" width="39.8" height="31.2" fill="#2e2e2e"/>
<text x="20.6" y="389" font-family="Liberation Serif, serif" font-size="31" font-weight="bold" fill="#d2d2d2" stroke="#d2d2d2" stroke-width="0.3" textLength="21.6" lengthAdjust="spacingAndGlyphs">T</text>
<polygon points="51,393.5 51,388.5 46,393.5" fill="#c6c6c6"/></svg>
<svg style="left:0;top:0" width="1492" height="1007" viewBox="0 0 1492 1007">
<polygon points="63.2,377.4 853.3,604.9 849.2,618.6 62.8,378.8" fill="#6a1010"/>
<polygon points="63.2,376.5 853.3,604.0 849.2,617.6 62.8,377.9" fill="#e40303"/>
<polygon points="852.6,595.6 875.4,618.3 844.2,623.6 851,616 855.5,604" fill="#e40303" stroke="#e40303" stroke-width="6.6" stroke-linejoin="round"/>
</svg>
</div>
</body>
</html>
